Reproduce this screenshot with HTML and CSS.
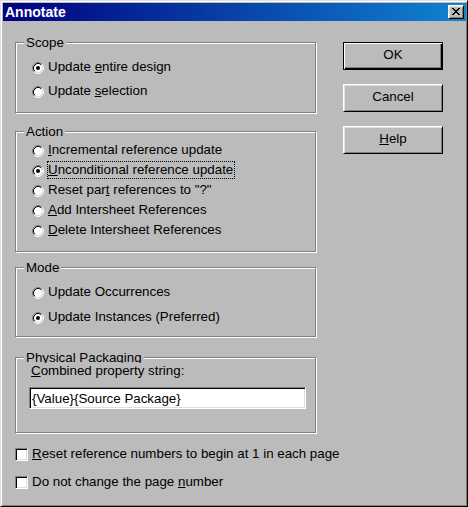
FILE: index.html
```html
<!DOCTYPE html>
<html>
<head>
<meta charset="utf-8">
<title>Annotate</title>
<link rel="stylesheet" href="styles.css">
</head>
<body>
<svg class="defs" width="0" height="0" aria-hidden="true">
  <symbol id="ring" viewBox="0 0 12 12">
    <circle cx="6" cy="6" r="4.2" fill="#fff"/>
    <path d="M2.11 9.89A5.5 5.5 0 0 1 9.89 2.11" stroke="#808080" fill="none"/>
    <path d="M9.89 2.11A5.5 5.5 0 0 1 2.11 9.89" stroke="#fff" fill="none"/>
    <path d="M2.82 9.18A4.5 4.5 0 0 1 9.18 2.82" stroke="#000" fill="none"/>
    <path d="M9.18 2.82A4.5 4.5 0 0 1 2.82 9.18" stroke="#dfdfdf" fill="none"/>
  </symbol>
</svg>
<div class="window">
  <div class="titlebar">
    <span class="title">Annotate</span>
    <span class="close">
      <svg width="8" height="7" viewBox="0 0 8 7" shape-rendering="crispEdges"><path d="M0 0h2v1H0zM6 0h2v1H6zM1 1h2v1H1zM5 1h2v1H5zM2 2h4v1H2zM3 3h2v1H3zM2 4h4v1H2zM1 5h2v1H1zM5 5h2v1H5zM0 6h2v1H0zM6 6h2v1H6z" fill="#000"/></svg>
    </span>
  </div>
  <div class="content">
    <div class="left">
      <div class="group scope">
        <span class="legend">Scope</span>
        <div class="opt"><svg class="radio" viewBox="0 0 12 12"><use href="#ring"/><circle cx="6" cy="6" r="2" fill="#000"/></svg><span>Update <u>e</u>ntire design</span></div>
        <div class="opt"><svg class="radio" viewBox="0 0 12 12"><use href="#ring"/></svg><span>Update <u>s</u>election</span></div>
      </div>
      <div class="group action">
        <span class="legend">Action</span>
        <div class="opt"><svg class="radio" viewBox="0 0 12 12"><use href="#ring"/></svg><span><u>I</u>ncremental reference update</span></div>
        <div class="opt"><svg class="radio" viewBox="0 0 12 12"><use href="#ring"/><circle cx="6" cy="6" r="2" fill="#000"/></svg><span class="focus"><u>U</u>nconditional reference update</span></div>
        <div class="opt"><svg class="radio" viewBox="0 0 12 12"><use href="#ring"/></svg><span>Reset par<u>t</u> references to "?"</span></div>
        <div class="opt"><svg class="radio" viewBox="0 0 12 12"><use href="#ring"/></svg><span><u>A</u>dd Intersheet References</span></div>
        <div class="opt"><svg class="radio" viewBox="0 0 12 12"><use href="#ring"/></svg><span><u>D</u>elete Intersheet References</span></div>
      </div>
      <div class="group mode">
        <span class="legend">Mode</span>
        <div class="opt"><svg class="radio" viewBox="0 0 12 12"><use href="#ring"/></svg><span>Update Occurrences</span></div>
        <div class="opt"><svg class="radio" viewBox="0 0 12 12"><use href="#ring"/><circle cx="6" cy="6" r="2" fill="#000"/></svg><span>Update Instances (Preferred)</span></div>
      </div>
      <div class="group phys">
        <span class="legend">Physical Packaging</span>
        <span class="field-label"><u>C</u>ombined property string:</span>
        <input class="field" type="text" value="{Value}{Source Package}">
      </div>
    </div>
    <div class="right">
      <button class="btn default">OK</button>
      <button class="btn">Cancel</button>
      <button class="btn"><span><u>H</u>elp</span></button>
    </div>
    <div class="check first"><span class="box"></span><span><u>R</u>eset reference numbers to begin at 1 in each page</span></div>
    <div class="check"><span class="box"></span><span>Do not change the page <u>n</u>umber</span></div>
  </div>
</div>
</body>
</html>
```
FILE: styles.css
```css
* { box-sizing: border-box; }
html, body { margin: 0; padding: 0; }
body {
  background: #bbbbbb;
  font-family: "Liberation Sans", Arial, sans-serif;
  font-size: 13.33px;
  color: #000;
}
.defs { position: absolute; width: 0; height: 0; overflow: hidden; }

.window {
  width: 468px;
  height: 507px;
  background: #bbbbbb;
  border: 1px solid;
  border-color: #dfdfdf #000 #000 #dfdfdf;
  box-shadow: inset 1px 1px 0 #fff, inset -1px -1px 0 #808080;
  padding: 2px 1px 1px 2px;
}

.titlebar {
  height: 18px;
  display: flex;
  align-items: center;
  justify-content: space-between;
  padding: 0 2px;
  background: linear-gradient(to right, #000080, #1084d0);
}
.title {
  color: #fff;
  font-weight: bold;
  font-size: 14px;
  line-height: 18px;
}
.close {
  width: 16px;
  height: 14px;
  background: #bbbbbb;
  border: 1px solid;
  border-color: #fff #000 #000 #fff;
  box-shadow: inset 1px 1px 0 #dfdfdf, inset -1px -1px 0 #808080;
  padding: 2px 0 0 3px;
  display: flex;
  align-items: flex-start;
}
.close svg { display: block; }

.content {
  display: grid;
  grid-template-columns: 301px 100px;
  column-gap: 27px;
  align-items: start;
  padding: 21px 0 0 12px;
}

.left { display: flex; flex-direction: column; }

.group {
  border: 1px solid #808080;
  box-shadow: inset 1px 1px 0 #fff, 1px 1px 0 #fff;
  display: flex;
  flex-direction: column;
  align-items: flex-start;
}
.legend {
  margin: -8px 0 0 8px;
  padding: 0 2px;
  background: #bbbbbb;
  line-height: 16px;
  white-space: nowrap;
}
.opt {
  display: flex;
  align-items: flex-start;
  gap: 4px;
  margin-left: 16px;
  height: 16px;
  line-height: 16px;
  white-space: nowrap;
}
.radio {
  width: 12px;
  height: 12px;
  flex: none;
  margin-top: 3px;
}
.focus {
  outline: 1px dotted #000;
  padding-right: 1px;
}

.scope { height: 71px; }
.scope .opt { margin-top: 8px; }

.action { height: 121px; margin-top: 18px; }
.action .opt { margin-top: 4px; }
.action .legend + .opt { margin-top: 2px; }

.mode { height: 70px; margin-top: 15px; }
.mode .opt { margin-top: 9px; }
.mode .legend + .opt { margin-top: 8px; }

.phys { height: 76px; margin-top: 20px; }
.phys .legend { height: 13px; overflow: hidden; }
.field-label {
  margin-left: 15px;
  line-height: 16px;
}
.field {
  margin: 8px 0 0 13px;
  width: 277px;
  height: 22px;
  background: #fff;
  border: 1px solid;
  border-color: #808080 #fff #fff #808080;
  box-shadow: inset 1px 1px 0 #000, inset -1px -1px 0 #dfdfdf;
  padding: 0 2px;
  font: inherit;
  color: #000;
  outline: none;
}

.right {
  display: flex;
  flex-direction: column;
  gap: 14px;
}
.btn {
  width: 100px;
  height: 28px;
  background: #bbbbbb;
  border: 1px solid;
  border-color: #fff #000 #000 #fff;
  box-shadow: inset 1px 1px 0 #dfdfdf, inset -1px -1px 0 #808080;
  font: inherit;
  color: #000;
  padding: 0 0 2px 0;
  display: flex;
  align-items: center;
  justify-content: center;
  line-height: 16px;
}
.btn.default {
  border: 1px solid #000;
  box-shadow: inset 1px 1px 0 #fff, inset -1px -1px 0 #000, inset -2px -2px 0 #808080;
}

.check {
  grid-column: 1 / -1;
  display: flex;
  align-items: flex-start;
  gap: 4px;
  height: 16px;
  line-height: 16px;
  white-space: nowrap;
  margin-top: 12px;
}
.check.first { margin-top: 13px; }
.box {
  width: 13px;
  height: 13px;
  flex: none;
  margin-top: 2px;
  background: #fff;
  border: 1px solid;
  border-color: #808080 #fff #fff #808080;
  box-shadow: inset 1px 1px 0 #000, inset -1px -1px 0 #dfdfdf;
}
```
